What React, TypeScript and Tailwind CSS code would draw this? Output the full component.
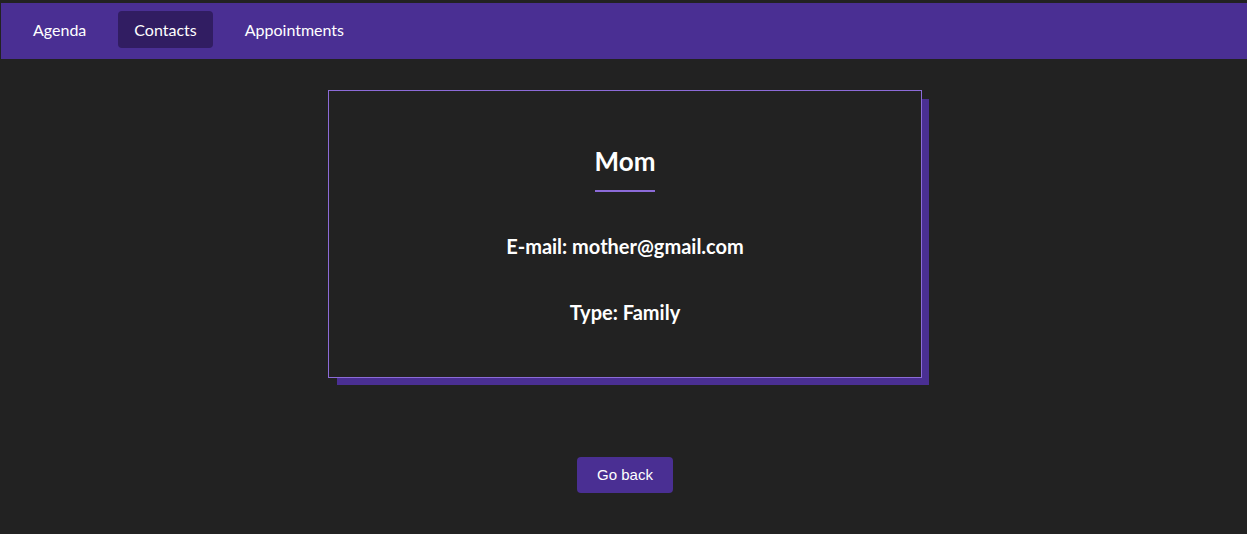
export default function App() {
	const links = ["Agenda", "Contacts", "Appointments"];
	return (
		<div className="min-h-[534px] bg-[#222222] pt-[3px] pl-px font-['Lato',sans-serif] text-white">
			<nav className="flex h-14 items-start gap-4 bg-[#4a2f93] pl-4 pt-2">
				{links.map((l) => (
					<a
						key={l}
						href="#"
						className={
							l === "Contacts"
								? "flex h-[37px] items-center rounded bg-[#311d62] px-4 pt-px text-base text-white"
								: "flex h-[37px] items-center rounded px-4 pt-px text-base text-white"
						}
					>
						{l}
					</a>
				))}
			</nav>
			<main className="flex flex-col items-center pt-[31px] pl-[2px]">
				<div className="flex h-[288px] w-[594px] flex-col items-center border border-[#8c6bd8] bg-[#222222] pt-[52px] shadow-[8px_8px_0_-1px_#4a2f93]">
					<h1 className="text-[26px] leading-9 font-bold">Mom</h1>
					<div className="mt-[11px] h-[2px] w-[60px] bg-[#8c6bd8]" />
					<p className="mt-10 text-xl leading-7 font-bold">E-mail: mother@gmail.com</p>
					<p className="mt-[38px] text-xl leading-7 font-bold">Type: Family</p>
				</div>
				<button className="mt-[79px] h-9 rounded bg-[#4a2f93] px-5 pt-px font-['Liberation_Sans',sans-serif] text-[15px] text-white">
					Go back
				</button>
			</main>
		</div>
	);
}
